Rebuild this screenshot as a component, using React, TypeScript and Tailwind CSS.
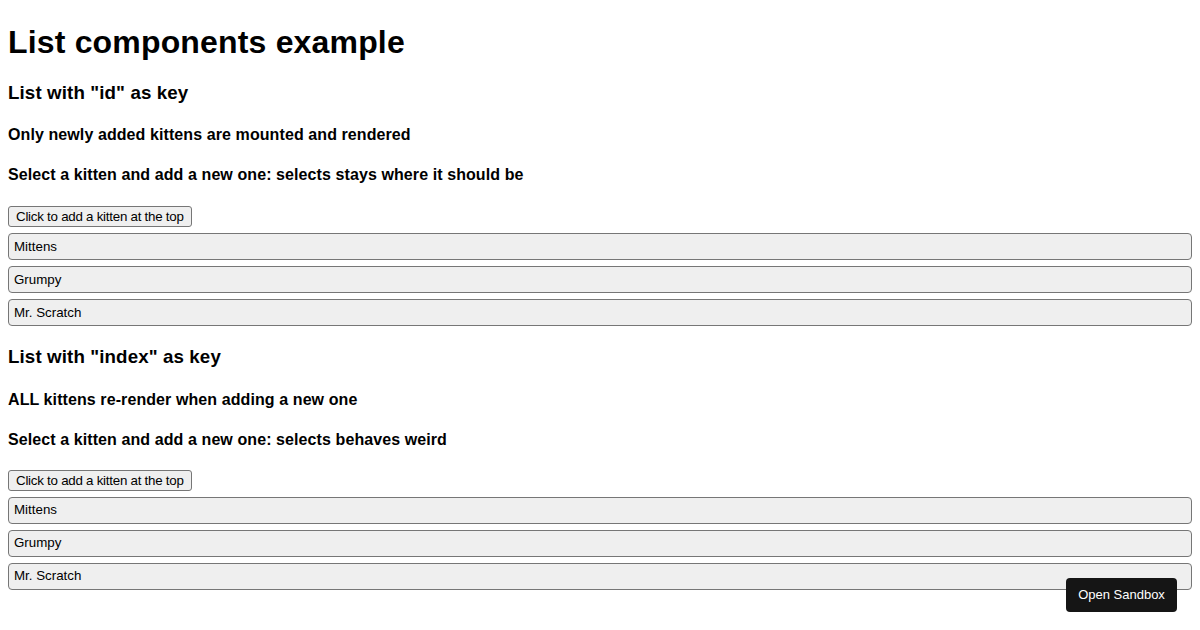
const kittens = ['Mittens', 'Grumpy', 'Mr. Scratch'];

type KittenListProps = {
  title: string;
  notes: string[];
  // margins tuned to the reference page spacing
  titleMargin: string;
  noteMargins: string[];
  buttonMargin: string;
};

const KittenList = ({ title, notes, titleMargin, noteMargins, buttonMargin }: KittenListProps) => (
  <section>
    <h3 className={`${titleMargin} font-bold text-[18.72px] leading-[normal] tracking-[0.12px]`}>
      {title}
    </h3>
    {notes.map((note, i) => (
      <h4
        key={note}
        className={`${noteMargins[i]} font-bold text-base leading-[normal] tracking-[0.09px]`}
      >
        {note}
      </h4>
    ))}
    <button
      type="button"
      className={`${buttonMargin} block h-[21px] w-[184px] whitespace-nowrap rounded-[3px] border border-[#767676] bg-[#efefef] pl-[7px] text-left text-[13.33px] leading-[normal] tracking-[-0.25px] text-black`}
    >
      Click to add a kitten at the top
    </button>
    <div className="mt-[6px] flex flex-col gap-[6px]">
      {kittens.map((name) => (
        <div
          key={name}
          className="flex h-[27px] items-center rounded-[4px] border border-[#767676] bg-[#efefef] px-[5px] text-[13.33px] text-black"
        >
          {name}
        </div>
      ))}
    </div>
  </section>
);

export default function App() {
  return (
    <div className="relative min-h-[630px] px-2 pt-px font-['Liberation_Sans',Arial,sans-serif] text-black">
      <h1 className="mt-[23.44px] font-bold text-[32px] leading-[normal] tracking-[0.17px]">
        List components example
      </h1>
      <KittenList
        title={'List with "id" as key'}
        notes={[
          'Only newly added kittens are mounted and rendered',
          'Select a kitten and add a new one: selects stays where it should be',
        ]}
        titleMargin="mt-[20.44px]"
        noteMargins={['mt-[22.28px]', 'mt-[22.28px]']}
        buttonMargin="mt-[22px]"
      />
      <KittenList
        title={'List with "index" as key'}
        notes={[
          'ALL kittens re-render when adding a new one',
          'Select a kitten and add a new one: selects behaves weird',
        ]}
        titleMargin="mt-[19.72px]"
        noteMargins={['mt-[23.28px]', 'mt-[21.28px]']}
        buttonMargin="mt-[21px]"
      />
      <button
        type="button"
        className="fixed right-[23px] bottom-[18px] h-[34px] w-[111px] rounded-[4px] bg-[#151515] text-[13px] text-white"
      >
        Open Sandbox
      </button>
    </div>
  );
}
